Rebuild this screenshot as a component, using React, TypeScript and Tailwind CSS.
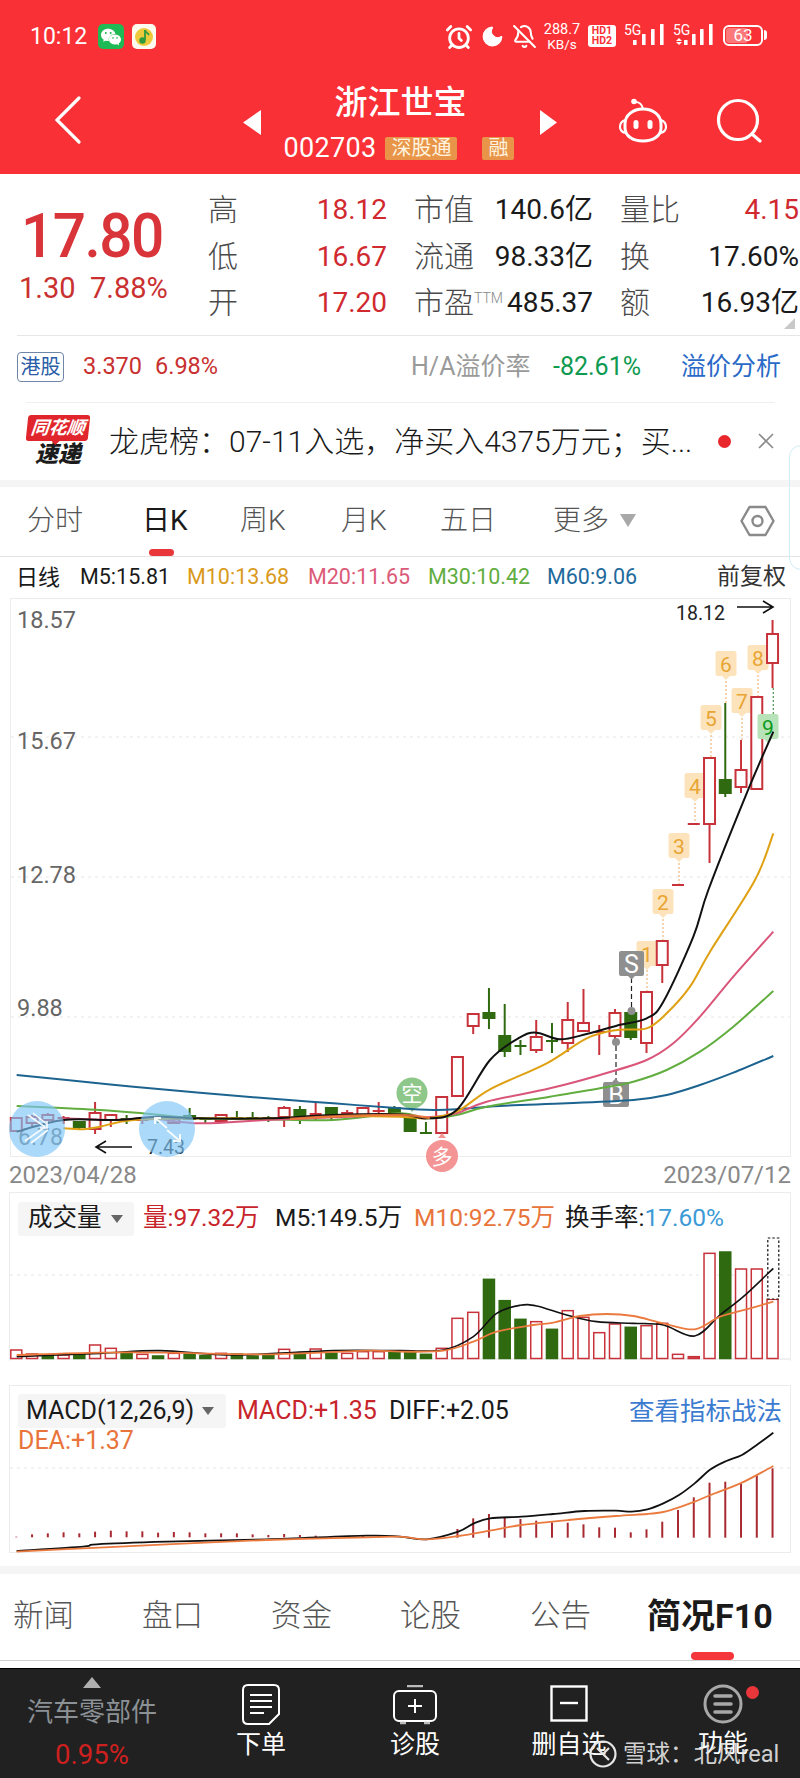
import React from 'react';
import { AlarmClock, Moon, BellOff } from 'lucide-react';
import { SiWechat } from 'react-icons/si';

type Pt = [number, number];

const RED = '#c8323a';
const GREEN = '#2f6a10';

// x position of the n-th candle from the left
const cx = (i: number) => 16.3 + i * 15.755;

const z3 = (u: number, v: number): Pt => [400 + u / 3, 590 + v / 3];
const z4 = (u: number, v: number): Pt => [400 + u / 3, 880 + v / 3];
const z5 = (u: number, v: number): Pt => [u / 3, 1040 + v / 3];
const z6 = (u: number, v: number): Pt => [400 + u / 3, 1180 + v / 3];
const z8 = (u: number, v: number): Pt => [u / 3, 1360 + v / 3];

function smooth(pts: Pt[]) {
  let d = `M${pts[0][0]} ${pts[0][1]}`;
  for (let i = 0; i < pts.length - 1; i++) {
    const p0 = pts[i - 1] || pts[i];
    const p1 = pts[i];
    const p2 = pts[i + 1];
    const p3 = pts[i + 2] || p2;
    d += ` C${p1[0] + (p2[0] - p0[0]) / 6} ${p1[1] + (p2[1] - p0[1]) / 6} ${p2[0] - (p3[0] - p1[0]) / 6} ${p2[1] - (p3[1] - p1[1]) / 6} ${p2[0]} ${p2[1]}`;
  }
  return d;
}

// color, body top, body bottom, wick top, wick bottom
const candles: [string, number, number, number, number][] = [
  ['r', 1118, 1131, 1118, 1131], ['r', 1117, 1123, 1115, 1126], ['r', 1115, 1120, 1113, 1124], ['r', 1118, 1120, 1116, 1124],
  ['g', 1122, 1127, 1121, 1130], ['r', 1113, 1129, 1102, 1134], ['r', 1115, 1120, 1115, 1127], ['g', 1119, 1120, 1115, 1124],
  ['r', 1120, 1121, 1118, 1124], ['g', 1119, 1121, 1118, 1123], ['r', 1119, 1123, 1118, 1124], ['g', 1116, 1119, 1108, 1120],
  ['g', 1119, 1120, 1118, 1123], ['r', 1115, 1121, 1114, 1122], ['g', 1118, 1120, 1111, 1120], ['g', 1118, 1120, 1112, 1120],
  ['g', 1118, 1120, 1116, 1122], ['r', 1108, 1117, 1106, 1127], ['g', 1110, 1117, 1106, 1124], ['r', 1114, 1115, 1103, 1120],
  ['g', 1108, 1115, 1108, 1120], ['r', 1113, 1114, 1110, 1117], ['r', 1108, 1115, 1108, 1115], ['r', 1111, 1112, 1102, 1115],
  ['g', 1108, 1113, 1106, 1117], ['g', 1119, 1131, 1119, 1132], ['g', 1133, 1134, 1122, 1134], ['r', 1097, 1133, 1097, 1133],
  ['r', 1057, 1096, 1057, 1096], ['r', 1014, 1026, 1014, 1034], ['g', 1013, 1018, 988, 1029], ['g', 1036, 1051, 1004, 1057],
  ['g', 1046, 1047, 1040, 1055], ['r', 1037, 1050, 1020, 1053], ['g', 1041, 1042, 1023, 1053], ['r', 1020, 1043, 1002, 1052],
  ['r', 1023, 1031, 989, 1031], ['r', 1032, 1033, 1025, 1055], ['r', 1013, 1036, 1009, 1043], ['g', 1013, 1037, 1008, 1040],
  ['r', 992, 1043, 992, 1053], ['r', 941, 965, 941, 983], ['r', 885, 886, 885, 886], ['r', 824, 825, 824, 825],
  ['r', 758, 824, 758, 863], ['g', 780, 793, 703, 797], ['r', 770, 787, 740, 793], ['r', 697, 789, 697, 789],
  ['r', 634, 663, 620, 688],
];

const ma60 = [z5(50, 105), z5(200, 120), z5(400, 140), z5(600, 158), z5(800, 175), z5(1000, 190), z4(0, 685), z4(100, 690), z4(170, 688), z4(300, 678), z4(500, 670), z4(700, 660), z4(800, 645), z4(900, 615), z4(1000, 578), z4(1120, 528)];
const ma30 = [z5(50, 198), z5(300, 210), z5(450, 222), z5(600, 235), z5(800, 238), z5(1000, 240), z4(0, 700), z4(80, 715), z4(170, 705), z4(260, 680), z4(450, 650), z4(600, 625), z4(700, 605), z4(800, 570), z4(900, 515), z4(1000, 440), z4(1120, 333)];
const ma20 = [z5(190, 235), z5(350, 240), z5(450, 235), z5(600, 250), z5(800, 240), z5(1000, 232), z4(0, 705), z4(80, 712), z4(170, 700), z4(260, 665), z4(450, 625), z4(600, 585), z4(740, 540), z4(820, 490), z4(900, 410), z4(1000, 290), z4(1120, 155)];
const ma10 = [z5(190, 265), z5(250, 268), z5(300, 260), z5(400, 240), z5(600, 235), z5(800, 235), z5(1000, 228), z4(0, 710), z4(80, 715), z4(170, 695), z4(270, 628), z4(440, 550), z4(560, 475), z4(650, 450), z4(740, 445), z4(800, 400), z4(870, 320), z4(930, 215), z4(1065, 0), z3(1120, 730)];
const ma5 = [z5(50, 275), z5(190, 240), z5(350, 240), z5(470, 230), z5(600, 235), z5(800, 235), z5(1000, 225), z4(0, 703), z4(80, 715), z4(170, 690), z4(270, 540), z4(360, 472), z4(410, 458), z4(480, 478), z4(560, 462), z4(650, 437), z4(740, 415), z4(790, 365), z4(880, 170), z3(925, 900), z3(1040, 610), z3(1120, 425)];

// volume bar tops, left to right
const volLeft = [930, 942, 945, 945, 942, 915, 925, 938, 943, 948, 940, 942, 947, 940, 942, 948, 945, 928, 942, 927, 940, 940, 935, 935, 937];
const volLeftGreen = [2, 4, 7, 9, 11, 12, 14, 15, 16, 18, 20, 24];
const volRight = [516, 523, 505, 415, 397, 298, 362, 418, 425, 448, 392, 412, 458, 432, 442, 437, 430, 523, 530, 220, 216, 267, 267, 358];
const volRightGreen = [0, 1, 5, 6, 7, 9, 14, 20];

const volBlack = [z5(50, 950), z5(300, 940), z5(480, 932), z5(700, 945), z5(1000, 932), z6(0, 512), z6(130, 510), z6(220, 470), z6(290, 400), z6(360, 376), z6(410, 378), z6(500, 405), z6(590, 425), z6(700, 430), z6(790, 435), z6(884, 468), z6(960, 405), z6(1030, 350), z6(1120, 265)];
const volOrange = [z5(50, 945), z5(300, 938), z5(500, 938), z5(800, 943), z5(1100, 932), z6(0, 515), z6(130, 512), z6(220, 485), z6(290, 455), z6(400, 435), z6(460, 428), z6(540, 408), z6(620, 402), z6(700, 408), z6(790, 430), z6(884, 448), z6(960, 410), z6(1050, 385), z6(1120, 365)];

const macdLeftTops = [530, 523, 520, 517, 520, 515, 512, 514, 514, 518, 516, 517, 520, 520, 520, 523, 525, 522, 525, 527, 528, 528, 528, 528, 528];
const macdRightTops = [1047, 1015, 1002, 1012, 1017, 1022, 1027, 1028, 1033, 1042, 1043, 1057, 1048, 1025, 990, 952, 908, 905, 910, 885, 865];
const macdBlack = [z8(50, 573), z8(250, 560), z8(290, 553), z8(500, 545), z8(800, 538), z8(1100, 527), z6(0, 1070), z6(80, 1078), z6(175, 1055), z6(222, 1030), z6(270, 1015), z6(364, 1010), z6(459, 1002), z6(553, 993), z6(648, 992), z6(695, 995), z6(742, 988), z6(790, 970), z6(837, 945), z6(884, 910), z6(932, 868), z6(979, 843), z6(1026, 825), z6(1073, 793), z6(1120, 758)];
const macdOrange = [z8(50, 575), z8(250, 565), z8(500, 553), z8(800, 540), z8(1100, 532), z6(0, 1070), z6(80, 1078), z6(175, 1068), z6(270, 1052), z6(364, 1035), z6(505, 1020), z6(648, 1008), z6(742, 1002), z6(790, 996), z6(837, 982), z6(884, 965), z6(932, 945), z6(1026, 908), z6(1120, 858)];

const tags: [string, number, number, number, number][] = [
  ['1', 647, 955, 970, 992], ['2', 663, 903, 919, 941], ['3', 679, 847, 863, 884], ['4', 695, 787, 803, 822],
  ['5', 711, 719, 735, 757], ['6', 726, 665, 681, 703], ['7', 742, 702, 718, 740], ['8', 758, 659, 675, 697],
];

function Tag({ x, y, n, fill, color }: { x: number; y: number; n: string; fill: string; color: string }) {
  return (
    <g>
      <path d={`M${x - 8} ${y - 14}h16q2.5 0 2.5 2.5v20q0 2.5-2.5 2.5h-4l-4 4-4-4h-4q-2.5 0-2.5-2.5v-20q0-2.5 2.5-2.5z`} fill={fill} />
      <text x={x} y={y + 7} textAnchor="middle" fontSize="21" fill={color}>{n}</text>
    </g>
  );
}

function SignalBars({ xs }: { xs: number[] }) {
  const heights = [5, 11, 16, 21];
  return (
    <svg width="42" height="22" viewBox="0 0 42 22" fill="white">
      {xs.map((x, i) => (
        <rect key={x} x={x} y={21 - heights[i]} width="3.6" height={heights[i]} rx="0.6" />
      ))}
    </svg>
  );
}

function StatusBar() {
  return (
    <div className="h-[74px] pl-[30px] flex items-start pt-[24px] text-white">
      <span className="text-[23px] leading-[26px] w-[68px]">10:12</span>
      <div className="w-[26px] h-[25px] rounded-[5px] bg-[#1fb956] flex items-center justify-center">
        <SiWechat className="w-[20px] h-[20px] text-white" />
      </div>
      <div className="ml-[8px] w-[24px] h-[25px] rounded-[5px] bg-[#fdfbf0] flex items-center justify-center">
        <svg width="20" height="20" viewBox="0 0 20 20">
          <circle cx="10" cy="10" r="9" fill="#eec93c" />
          <path d="M11 3v10" stroke="#2f9a3c" strokeWidth="1.800" fill="none" />
          <path d="M11 3c1 3 3 3 4 5" stroke="#2f9a3c" strokeWidth="1.800" fill="none" />
          <circle cx="8.500" cy="13.500" r="3.200" fill="#2f9a3c" />
        </svg>
      </div>
      <div className="ml-[289px] flex items-start">
        <AlarmClock className="w-[28px] h-[28px] -mt-[1px]" strokeWidth={2.4} />
        <Moon className="ml-[7px] w-[25px] h-[25px] fill-white" strokeWidth={1} />
        <BellOff className="ml-[7px] w-[25px] h-[25px]" strokeWidth={2} />
        <div className="ml-[6px] w-[38px] text-center text-[14.5px] leading-[14px] -mt-[1px] whitespace-nowrap">
          <div>288.7</div>
          <div className="text-[13.5px]">KB/s</div>
        </div>
        <div className="ml-[7px] w-[28px] h-[22px] mt-[1px] bg-white rounded-[3px] text-[#f93035] text-[10.5px] font-bold leading-[10.5px] text-center pt-[0.5px]">
          <div>HD1</div>
          <div>HD2</div>
        </div>
        <div className="ml-[8px] w-[42px] relative h-[24px]">
          <span className="absolute left-0 -top-[1px] text-[14px] leading-[14px]">5G</span>
          <div className="absolute left-0 top-0"><SignalBars xs={[9, 18, 27, 36]} /></div>
        </div>
        <div className="ml-[7px] w-[42px] relative h-[24px]">
          <span className="absolute left-0 -top-[1px] text-[14px] leading-[14px]">5G</span>
          <span className="absolute left-[3px] top-[14px] w-0 h-0 border-x-[3px] border-x-transparent border-b-[3px] border-b-white" />
          <span className="absolute left-[3px] top-[18px] w-0 h-0 border-x-[3px] border-x-transparent border-t-[3px] border-t-white" />
          <div className="absolute left-0 top-0"><SignalBars xs={[11, 19, 27, 36]} /></div>
        </div>
        <div className="ml-[8px] relative w-[40px] h-[21px] mt-[1px] border-2 border-white rounded-[6px] text-[17px] leading-[17px] text-center overflow-hidden">
          <div className="absolute left-[1px] top-[1px] bottom-[1px] w-[22px] bg-white/35 rounded-[3px]" />
          <span className="relative">63</span>
        </div>
        <div className="w-[3px] h-[10px] bg-white mt-[6px] ml-[1px] rounded-r-sm" />
      </div>
    </div>
  );
}

function Header() {
  return (
    <div className="h-[174px] bg-[#f93035] shrink-0">
      <StatusBar />
      <div className="relative h-[100px]">
        <div className="flex flex-col items-center pl-[1px]">
          <div className="text-white text-[33px] font-medium leading-[44px] mt-[7px]">浙江世宝</div>
          <div className="flex items-center mt-[10px] -ml-[3px]">
            <span className="text-white text-[27px] leading-[26px] tracking-[0.3px]">002703</span>
            <span className="ml-[9px] w-[72px] h-[23px] bg-[#e8954a] rounded-[2px] text-[#fff3df] text-[20px] leading-[23px] text-center">深股通</span>
            <span className="ml-[25px] w-[32px] h-[23px] bg-[#e8954a] rounded-[2px] text-[#fff3df] text-[20px] leading-[23px] text-center">融</span>
          </div>
        </div>
        {/* nav icons sit over the centred title block */}
        <svg className="absolute left-[53px] top-[22px]" width="30" height="48" viewBox="0 0 30 48" fill="none" stroke="white" strokeWidth="3.2">
          <path d="M26 2L4 24l22 22" strokeLinecap="round" />
        </svg>
        <svg className="absolute left-[243px] top-[36px]" width="18" height="25" viewBox="0 0 18 25" fill="white"><path d="M18 0v25L0 12.5z" /></svg>
        <svg className="absolute left-[540px] top-[36px]" width="17" height="25" viewBox="0 0 17 25" fill="white"><path d="M0 0v25l17-12.5z" /></svg>
        <svg className="absolute left-[618px] top-[24px]" width="50" height="46" viewBox="0 0 50 46" fill="none" stroke="white" strokeWidth="3">
          <circle cx="16" cy="3.500" r="2.800" fill="white" stroke="none" />
          <path d="M17 4c5 0 7 2 8 7" strokeWidth="2.200" />
          <path d="M25 11c-10 0-18 6-18 15v4c0 8 8 13 18 13s18-5 18-13v-4c0-9-8-15-18-15z" />
          <path d="M7 22c-3 1-5 4-5 7s2 5 5 6M43 22c3 1 5 4 5 7s-2 5-5 6" strokeWidth="2.200" />
          <rect x="15.500" y="22" width="5" height="9" rx="2.500" fill="white" stroke="none" />
          <rect x="29.500" y="22" width="5" height="9" rx="2.500" fill="white" stroke="none" />
        </svg>
        <svg className="absolute left-[716px] top-[24px]" width="46" height="46" viewBox="0 0 46 46" fill="none" stroke="white" strokeWidth="3.200">
          <circle cx="22" cy="22" r="19.500" />
          <path d="M36 36l8 7" strokeLinecap="round" />
        </svg>
      </div>
    </div>
  );
}

const quoteRows = [
  [['高', '18.12', 'red'], ['市值', '140.6亿', 'dark'], ['量比', '4.15', 'red']],
  [['低', '16.67', 'red'], ['流通', '98.33亿', 'dark'], ['换', '17.60%', 'dark']],
  [['开', '17.20', 'red'], ['市盈', '485.37', 'dark'], ['额', '16.93亿', 'dark']],
];

function Quote() {
  return (
    <div className="relative h-[162px] shrink-0 flex border-b border-[#e6e6e6] ml-[17px]">
      <div className="w-[208px] shrink-0 -ml-[17px] pl-[21px] pt-[29px]">
        <div className="text-[#d9343a] text-[61px] leading-[66px] font-medium tracking-[-1.6px] scale-x-[0.96] origin-left">17.80</div>
        <div className="text-[#c9302f] text-[29px] leading-[34px] -ml-[2px] mt-[2px] flex">
          <span className="w-[71px]">1.30</span>
          <span>7.88%</span>
        </div>
      </div>
      <div className="pt-[13px] flex flex-col">
        {quoteRows.map((row, i) => (
          <div key={i} className="h-[46.5px] flex gap-[27px] items-center">
            {row.map(([label, value, tone]) => (
              <div key={label} className="w-[179px] flex justify-between items-center text-[28px] leading-[46px] whitespace-nowrap">
                <span className="text-[#4a4a4a] text-[30px] font-light flex items-start">
                  {label}
                  {label === '市盈' && <span className="text-[14px] leading-[14px] text-[#888] mt-[11px]">TTM</span>}
                </span>
                <span className={tone === 'red' ? 'text-[#d0292f]' : 'text-[#1a1a1a]'}>{value}</span>
              </div>
            ))}
          </div>
        ))}
      </div>
      <div className="absolute right-[5px] bottom-[6px] w-0 h-0 border-l-[11px] border-l-transparent border-b-[11px] border-b-[#c9c9c9]" />
    </div>
  );
}

function HkRow() {
  return (
    <div className="h-[66px] shrink-0 flex items-center pl-[17px] pb-[4px] whitespace-nowrap">
      <span className="w-[47px] h-[30px] border border-[#6f86a8] rounded-[4px] text-[#2a5ca8] text-[20px] leading-[28px] text-center">港股</span>
      <span className="ml-[19px] text-[#c9302f] text-[23.5px] w-[72px]">3.370</span>
      <span className="text-[#c9302f] text-[23.5px] w-[256px]">6.98%</span>
      <span className="text-[#9a9a9a] text-[25px] w-[142px]">H/A溢价率</span>
      <span className="text-[#0e9a50] text-[25px] w-[128px]">-82.61%</span>
      <span className="text-[#2a6ac8] text-[25px]">溢价分析</span>
    </div>
  );
}

function NewsRow() {
  return (
    <div className="h-[78px] shrink-0 relative flex items-center pl-[27px]">
      <div className="absolute top-0 left-[26px] right-[25px] h-px bg-[#efefef]" />
      <div className="w-[62px] flex flex-col items-center">
        <div className="relative w-[62px] h-[26px] bg-[#e0262c] rounded-[3px] -skew-x-6 text-white text-[18px] leading-[26px] text-center font-bold italic">
          同花顺
          <span className="absolute left-[26px] -bottom-[4px] w-0 h-0 border-x-[4px] border-x-transparent border-t-[4px] border-t-[#e0262c]" />
        </div>
        <div className="text-[#1c1c1c] text-[23px] leading-[24px] font-black italic mt-[2px]">速递</div>
      </div>
      <span className="ml-[20px] text-[#1a1a1a] text-[30px] w-[609px] whitespace-nowrap font-light">龙虎榜：07-11入选，净买入4375万元；买...</span>
      <span className="w-[13px] h-[13px] rounded-full bg-[#e8262c]" />
      <svg className="ml-[27px]" width="16" height="16" viewBox="0 0 16 16" stroke="#8a8a8a" strokeWidth="1.6"><path d="M1 1l14 14M15 1L1 15" /></svg>
    </div>
  );
}

function PeriodTabs() {
  return (
    <div className="relative h-[70px] shrink-0 border-b border-[#e4e4e4] grid grid-cols-[115px_98px_101px_99px_113px_auto] items-center pl-[27px] pb-[2px] text-[28px] text-[#555] font-light">
      <span>分时</span>
      <span className="text-[#1a1a1a] font-normal">日K</span>
      <span>周K</span>
      <span>月K</span>
      <span>五日</span>
      <span className="flex items-center">更多<span className="ml-[11px] w-0 h-0 border-x-[8px] border-x-transparent border-t-[13px] border-t-[#a8a8a8]" /></span>
      <div className="absolute left-[149px] bottom-0 w-[25px] h-[7px] rounded-full bg-[#e8363a]" />
      <svg className="absolute left-[740px] top-[18px]" width="35" height="32" viewBox="0 0 35 32" fill="none" stroke="#8a8a8a" strokeWidth="2.4">
        <path d="M9.5 2h16l8 14-8 14h-16l-8-14z" strokeLinejoin="round" />
        <circle cx="17.5" cy="16" r="5" />
      </svg>
    </div>
  );
}

function MaRow() {
  return (
    <div className="relative h-[41px] shrink-0 grid grid-cols-[64px_107px_121px_120px_119px_auto] items-center pl-[16px] text-[21.5px]">
      <span className="text-[#1a1a1a] text-[22px]">日线</span>
      <span className="text-[#1a1a1a]">M5:15.81</span>
      <span className="text-[#d99a1c]">M10:13.68</span>
      <span className="text-[#dc5a78]">M20:11.65</span>
      <span className="text-[#62ad3f]">M30:10.42</span>
      <span className="text-[#1f6a9c]">M60:9.06</span>
      <span className="absolute right-[14px] text-[#333] text-[23px]">前复权</span>
    </div>
  );
}

function PriceChart() {
  return (
    <div className="relative h-[559px] shrink-0 ml-[10px] w-[781px] border border-[#ececec]">
      <svg className="block overflow-visible" width="779" height="557" viewBox="11 599 779 557">
        {[737, 877, 1017].map((y) => (
          <line key={y} x1="11" x2="790" y1={y} y2={y} stroke="#e6e6e6" strokeDasharray="3 4" />
        ))}
        <g fontSize="23.5" fill="#666">
          <text x="17" y="628">18.57</text>
          <text x="17" y="749">15.67</text>
          <text x="17" y="883">12.78</text>
          <text x="17" y="1016">9.88</text>
        </g>
        <text x="18" y="1145" fontSize="23" fill="#6f6f6f">6.78</text>

        {tags.map(([n, x, y, y1, y2]) => (
          <line key={n} x1={x} x2={x} y1={y1} y2={y2} stroke="#f0b878" strokeWidth="1.2" strokeDasharray="2 2" />
        ))}
        <line x1="773.3" x2="773.3" y1="688" y2="716" stroke="#4a9a4a" strokeWidth="1.2" strokeDasharray="2 2" />
        {tags.map(([n, x, y]) => (
          <Tag key={n} x={x} y={y} n={n} fill="#fde3bb" color="#e8a533" />
        ))}

        {candles.map(([c, bt, bb, wt, wb], i) => {
          const x = cx(i);
          const color = c === 'r' ? RED : GREEN;
          const flat = bb - bt <= 2;
          return (
            <g key={i}>
              {wt < bt && <line x1={x} x2={x} y1={wt} y2={bt} stroke={color} strokeWidth="2" />}
              {wb > bb && <line x1={x} x2={x} y1={bb} y2={wb} stroke={color} strokeWidth="2" />}
              {flat ? (
                <line x1={x - 6} x2={x + 6} y1={bt} y2={bt} stroke={color} strokeWidth="2" />
              ) : (
                <rect x={x - 5.5} y={bt} width="11" height={bb - bt} stroke={color} strokeWidth="2" fill={c === 'r' ? 'white' : GREEN} />
              )}
            </g>
          );
        })}

        <Tag x={768} y={728} n="9" fill="#b8e3b8" color="#0a9a20" />

        {/* S / B signals */}
        <line x1="631.5" x2="631.5" y1="978" y2="1008" stroke="#222" strokeWidth="1.2" strokeDasharray="5 3" />
        <circle cx="631.5" cy="1011" r="4" fill="#8f8f8f" />
        <path d="M621 951h21q2 0 2 2v21q0 2-2 2h-7l-3.500 3.500-3.500-3.500h-7q-2 0-2-2v-21q0-2 2-2z" fill="#8f8f8f" />
        <text x="631.500" y="973" textAnchor="middle" fontSize="25" fill="white">S</text>
        <line x1="616" x2="616" y1="1046" y2="1080" stroke="#222" strokeWidth="1.2" strokeDasharray="5 3" />
        <circle cx="616" cy="1042" r="4" fill="#8f8f8f" />
        <path d="M605 1082h7l3.500-3.500 3.500 3.500h8q2 0 2 2v21q0 2-2 2h-22q-2 0-2-2v-21q0-2 2-2z" fill="#8f8f8f" />
        <text x="616" y="1104" textAnchor="middle" fontSize="25" fill="white">B</text>

        <circle cx="412" cy="1093" r="15.500" fill="#8ec78a" />
        <path d="M408 1107h8l-4 5z" fill="#8ec78a" />
        <text x="412" y="1101" textAnchor="middle" fontSize="21" fill="white">空</text>

        <path d={smooth(ma60)} fill="none" stroke="#1c648f" strokeWidth="2" />
        <path d={smooth(ma30)} fill="none" stroke="#62ad3f" strokeWidth="2" />
        <path d={smooth(ma20)} fill="none" stroke="#d9557a" strokeWidth="2" />
        <path d={smooth(ma10)} fill="none" stroke="#dfa012" strokeWidth="2" />
        <path d={smooth(ma5)} fill="none" stroke="#111" strokeWidth="2" />
        <path d="M290 1119c40-3 80-4 110-4 15 0 25 2 30 3" fill="none" stroke="#ef7a3c" strokeWidth="2.500" opacity="0.85" />

        <path d="M438 1138h8l-4-5z" fill="#f59494" />
        <circle cx="442" cy="1156" r="16" fill="#f59494" />
        <text x="442" y="1164" textAnchor="middle" fontSize="21" fill="white">多</text>

        <text x="676" y="620" fontSize="19.500" fill="#222">18.12</text>
        <path d="M737 607h36m-10-6l10 6-10 6" fill="none" stroke="#111" strokeWidth="1.600" />
        <path d="M132 1147H96m10-6l-10 6 10 6" fill="none" stroke="#111" strokeWidth="1.600" />
        <text x="147" y="1154" fontSize="19.500" fill="#222">7.43</text>

        {/* touch markers left on top of the capture */}
        <circle cx="37" cy="1129" r="28" fill="#7cc4f8" opacity="0.65" />
        <circle cx="167" cy="1129" r="28" fill="#7cc4f8" opacity="0.65" />
        <g fill="none" stroke="white" strokeWidth="1.600" opacity="0.9">
          <path d="M28 1115l17 12M33 1113l15 12M47 1121v7h-7" />
          <path d="M25 1141l20-14M31 1143l17-13" />
          <path d="M155 1118l12 10M155 1124v-6h6" strokeWidth="2" />
          <path d="M167 1130l13 11M180 1134v7h-7" strokeWidth="2" />
        </g>
      </svg>
    </div>
  );
}

function DateRow() {
  return (
    <div className="h-[35px] shrink-0 flex justify-between items-center pl-[9px] pr-[9px] text-[24px] text-[#888]">
      <span>2023/04/28</span>
      <span>2023/07/12</span>
    </div>
  );
}

function VolumeChart() {
  return (
    <div className="relative h-[169px] shrink-0 ml-[9px] w-[782px] border-t border-x border-[#ececec]">
      <div className="h-[43px] flex items-center pt-[8px] pl-[8px] text-[24.5px] whitespace-nowrap">
        <span className="w-[116px] h-[34px] bg-[#f5f5f5] rounded-[3px] flex items-center pl-[10px] text-[#1a1a1a]">
          成交量<span className="ml-[9px] w-0 h-0 border-x-[6px] border-x-transparent border-t-[8px] border-t-[#666]" />
        </span>
        <span className="ml-[9px] w-[132px] text-[#c8242b]">量:97.32万</span>
        <span className="w-[139px] text-[#1a1a1a]">M5:149.5万</span>
        <span className="w-[151px] text-[#e8743b]">M10:92.75万</span>
        <span className="text-[#1a1a1a]">换手率:</span>
        <span className="text-[#3c9ad6]">17.60%</span>
      </div>
      <svg className="block overflow-visible" width="780" height="124" viewBox="10 1236 780 124">
        <line x1="10" x2="790" y1="1275" y2="1275" stroke="#e6e6e6" strokeDasharray="3 4" />
        <line x1="10" x2="790" y1="1359" y2="1359" stroke="#e2e2e2" />
        {volLeft.map((v, i) => {
          const g = volLeftGreen.includes(i);
          const top = 1040 + v / 3;
          return <rect key={i} x={cx(i) - 5.500} y={top} width="11" height={1358.500 - top} fill={g ? GREEN : 'white'} stroke={g ? GREEN : RED} strokeWidth="1.500" />;
        })}
        {volRight.map((v, i) => {
          const g = volRightGreen.includes(i);
          const top = 1180 + v / 3;
          const solid = i === 18;
          return <rect key={i} x={cx(25 + i) - 5.500} y={top} width="11" height={1358.500 - top} fill={g ? GREEN : solid ? '#e0505a' : 'white'} stroke={g ? GREEN : RED} strokeWidth="1.500" />;
        })}
        <rect x="767.800" y="1238" width="11" height="61" fill="white" stroke="#111" strokeWidth="1.200" strokeDasharray="2.500 2" />
        <path d={smooth(volBlack)} fill="none" stroke="#111" strokeWidth="1.600" />
        <path d={smooth(volOrange)} fill="none" stroke="#ea7a3e" strokeWidth="1.800" />
      </svg>
    </div>
  );
}

function MacdChart() {
  return (
    <div className="relative h-[168px] shrink-0 mt-[24px] ml-[9px] w-[782px] border border-[#ececec] text-[25px]">
      <div className="h-[67px] pl-[8px] pt-[8px]">
        <div className="flex items-center whitespace-nowrap h-[34px]">
          <span className="w-[208px] h-[34px] bg-[#f5f5f5] rounded-[3px] flex items-center pl-[8px] text-[#1a1a1a]">
            MACD(12,26,9)<span className="ml-[8px] w-0 h-0 border-x-[6px] border-x-transparent border-t-[8px] border-t-[#666]" />
          </span>
          <span className="ml-[11px] w-[152px] text-[#c8242b]">MACD:+1.35</span>
          <span className="text-[#1a1a1a]">DIFF:+2.05</span>
          <span className="absolute right-[8px] text-[#3c7cd0] text-[25.5px]">查看指标战法</span>
        </div>
        <div className="text-[#e8743b] leading-[26px]">DEA:+1.37</div>
      </div>
      <svg className="block overflow-visible relative" width="780" height="99" viewBox="10 1453 780 99">
        <line x1="10" x2="790" y1="1468" y2="1468" stroke="#e6e6e6" strokeDasharray="3 4" />
        {macdLeftTops.map((v, i) => (
          <line key={i} x1={cx(i)} x2={cx(i)} y1={1360 + v / 3} y2={1537.300} stroke="#a82a30" strokeWidth="2" />
        ))}
        {macdRightTops.map((v, i) => (
          <line key={i} x1={cx(i + 28)} x2={cx(i + 28)} y1={1180 + v / 3} y2={1537.700} stroke="#a82a30" strokeWidth="2" />
        ))}
        <path d={smooth(macdBlack)} fill="none" stroke="#111" strokeWidth="1.800" />
        <path d={smooth(macdOrange)} fill="none" stroke="#ea7a3e" strokeWidth="1.800" />
      </svg>
    </div>
  );
}

function BottomTabs() {
  return (
    <div className="relative h-[87px] shrink-0 border-b border-[#cfcfcf] grid grid-cols-[129px_129px_129px_130px_117px_auto] items-center pl-[13px] pb-[2px] text-[30.5px] text-[#555] font-light whitespace-nowrap">
      <span>新闻</span>
      <span>盘口</span>
      <span>资金</span>
      <span>论股</span>
      <span>公告</span>
      <span className="text-[#1a1a1a] text-[34px] font-bold">简况F10</span>
      <div className="absolute left-[691px] bottom-0 w-[43px] h-[8px] rounded-full bg-[#f5373c]" />
    </div>
  );
}

function ActionBar() {
  return (
    <div className="relative h-[110px] shrink-0 mt-[7px] bg-[#212121] border-t border-black flex text-white text-[25px]">
      <div className="w-[184px] flex flex-col items-center pt-[8px]">
        <span className="w-0 h-0 border-x-[9px] border-x-transparent border-b-[11px] border-b-[#b0b0b0]" />
        <span className="mt-[9px] text-[#8c9196] text-[26px] leading-[30px]">汽车零部件</span>
        <span className="mt-[13px] text-[#cf2020] text-[27.5px] leading-[30px]">0.95%</span>
      </div>
      <div className="w-[154px] flex flex-col items-center pt-[15px]">
        <svg width="38" height="41" viewBox="0 0 38 41" fill="none" stroke="white" strokeWidth="2">
          <path d="M6 1h26q5 0 5 5v24L27 40H6q-5 0-5-5V6q0-5 5-5z" />
          <path d="M8 11h22M8 17h22M8 23h22M8 29h14" />
        </svg>
        <span className="leading-[30px] mt-[5px]">下单</span>
      </div>
      <div className="w-[154px] flex flex-col items-center pt-[16px]">
        <svg width="44" height="40" viewBox="0 0 44 40" fill="none" stroke="white" strokeWidth="2">
          <path d="M14 1h16" strokeWidth="2.500" stroke="#bbb" />
          <rect x="1" y="6" width="42" height="30" rx="5" />
          <path d="M22 14v14M15 21h14" />
          <path d="M7 38h6M31 38h6" strokeWidth="2.500" stroke="#bbb" />
        </svg>
        <span className="leading-[30px] mt-[5px]">诊股</span>
      </div>
      <div className="w-[154px] flex flex-col items-center pt-[16px]">
        <svg width="38" height="37" viewBox="0 0 38 37" fill="none" stroke="white" strokeWidth="2.400">
          <rect x="1.500" y="1.500" width="35" height="34" />
          <path d="M10 18h18" />
        </svg>
        <span className="leading-[30px] mt-[8px]">删自选</span>
      </div>
      <div className="relative w-[154px] flex flex-col items-center pt-[15px]">
        <svg width="40" height="40" viewBox="0 0 40 40" fill="none" stroke="#a8a8a8">
          <circle cx="20" cy="20" r="18" strokeWidth="3" />
          <path d="M12 12h16M12 20h16M12 28h16" strokeWidth="3.500" strokeLinecap="round" />
        </svg>
        <span className="leading-[30px] mt-[5px]">功能</span>
        <span className="absolute left-[100px] top-[17px] w-[13px] h-[13px] rounded-full bg-[#e8363a]" />
      </div>
      {/* watermark stamped over the bar */}
      <div className="absolute left-[589px] top-[70px] flex items-center text-[#e8e8e8]/90 text-[23.5px]">
        <svg width="28" height="30" viewBox="0 0 28 30" fill="none" stroke="#e6e6e6" strokeWidth="2.200">
          <circle cx="14" cy="15" r="12.500" />
          <path d="M8 9l12 12M14 15l6-6" />
        </svg>
        <span className="ml-[6px] leading-[30px] whitespace-nowrap">雪球：北风real</span>
      </div>
    </div>
  );
}

export default function App() {
  return (
    <div className="relative w-[800px] h-[1778px] overflow-hidden bg-white flex flex-col font-['Roboto','Noto_Sans_CJK_SC',sans-serif]">
      <Header />
      <Quote />
      <HkRow />
      <NewsRow />
      <div className="h-[7px] shrink-0 bg-[#f5f5f5]" />
      <PeriodTabs />
      <MaRow />
      <PriceChart />
      <DateRow />
      <VolumeChart />
      <MacdChart />
      <div className="h-[8px] shrink-0 mt-[13px] bg-[#f5f5f5]" />
      <BottomTabs />
      <ActionBar />
      {/* faint capture edge on the right of the tabs */}
      <div className="absolute left-[789px] top-[445px] w-[14px] h-[125px] border border-[#cfeef5] rounded-l-[12px]" />
    </div>
  );
}
